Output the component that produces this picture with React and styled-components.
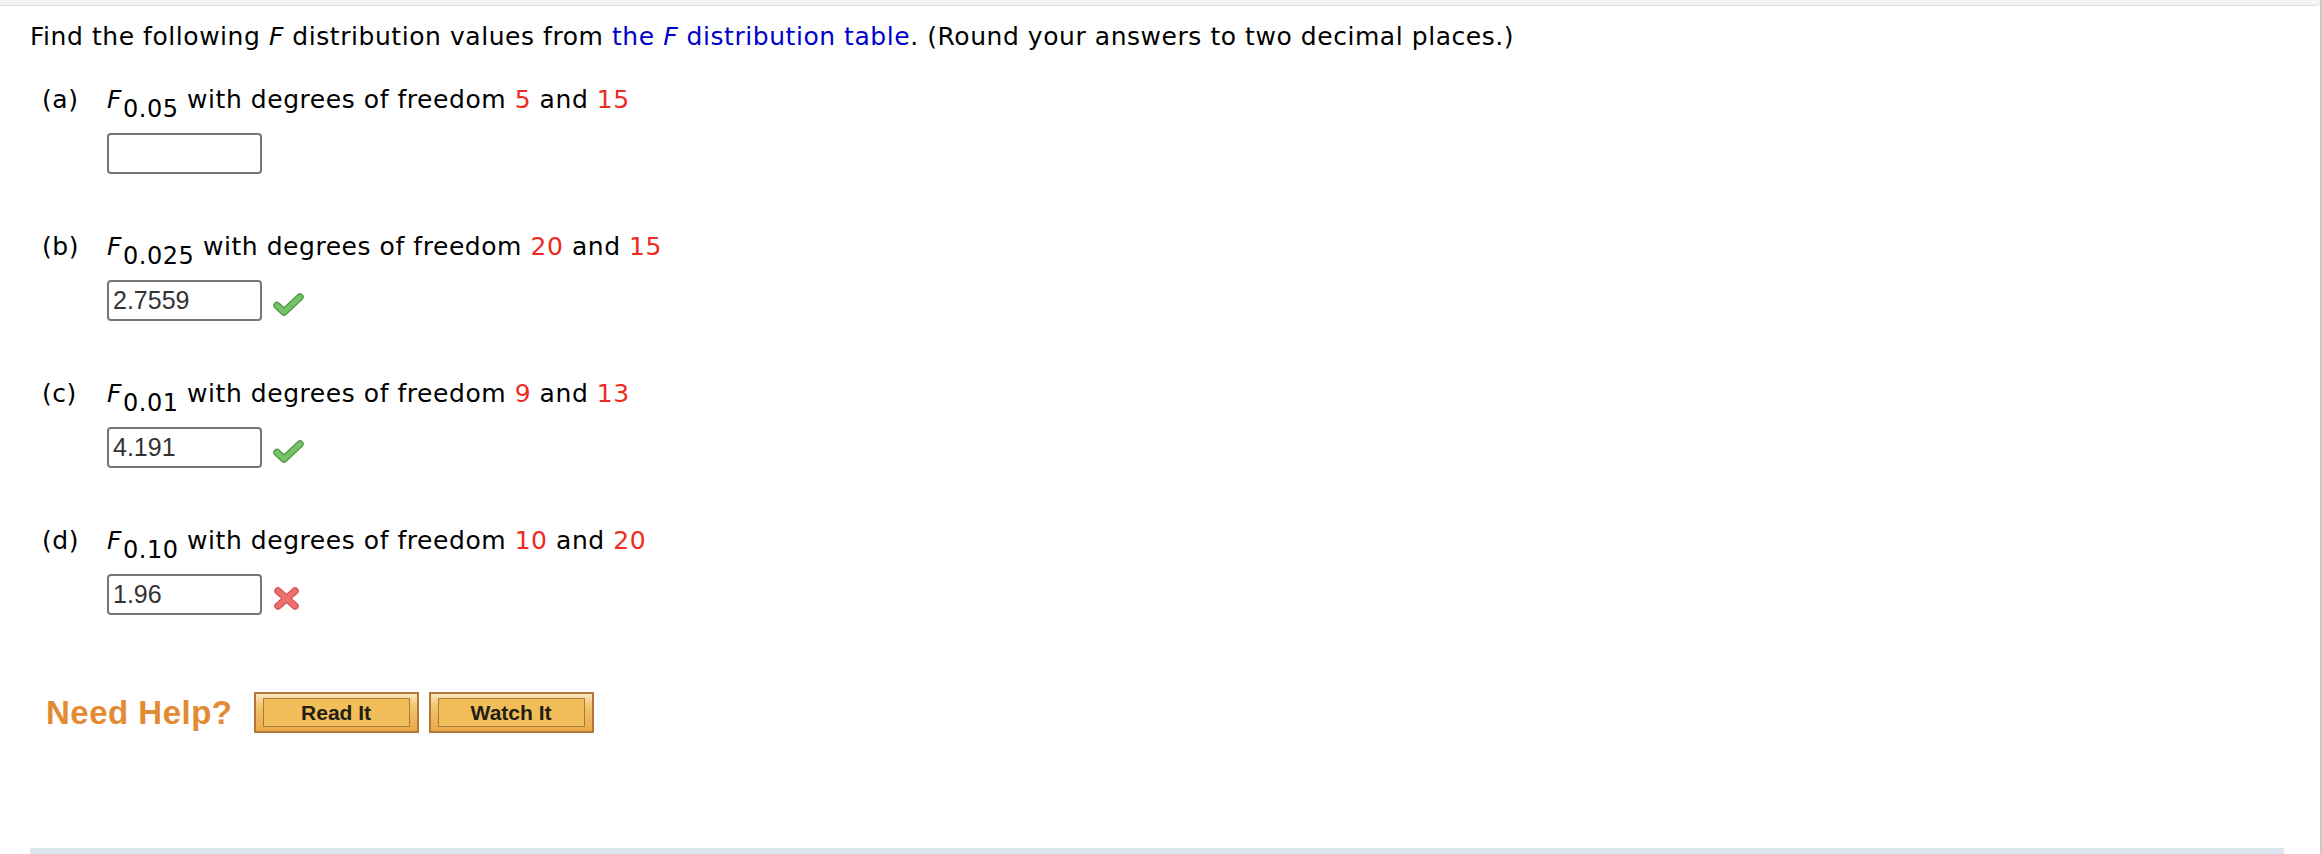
import React from 'react'
import styled, { createGlobalStyle } from 'styled-components'

const GlobalStyle = createGlobalStyle`
html, body {
    margin: 0;
    padding: 0;
    background: #fff;
    overflow: hidden;
}
body {
    font-family: "DejaVu Sans", Verdana, sans-serif;
}
`

const questions = [
    { key: 'a', sub: '0.05', df1: '5', df2: '15', value: '', status: null },
    { key: 'b', sub: '0.025', df1: '20', df2: '15', value: '2.7559', status: 'ok' },
    { key: 'c', sub: '0.01', df1: '9', df2: '13', value: '4.191', status: 'ok' },
    { key: 'd', sub: '0.10', df1: '10', df2: '20', value: '1.96', status: 'bad' },
]

const CheckMark = () => (
    <svg width="31" height="23" viewBox="0 0 31 23">
        <path d="M4 12.5 L11 19 L27 4" fill="none" stroke="#4f9a44" strokeWidth="7.5" strokeLinecap="round" strokeLinejoin="round" />
        <path d="M4 12.5 L11 19 L27 4" fill="none" stroke="#75c366" strokeWidth="5" strokeLinecap="round" strokeLinejoin="round" />
    </svg>
)

const CrossMark = () => (
    <svg width="27" height="25" viewBox="0 0 27 25">
        <path d="M5 5 L22 20 M22 5 L5 20" fill="none" stroke="#d85454" strokeWidth="7.5" strokeLinecap="round" />
        <path d="M5 5 L22 20 M22 5 L5 20" fill="none" stroke="#ec7070" strokeWidth="5" strokeLinecap="round" />
    </svg>
)

const App = () => {
    return (
        <Page>
            <GlobalStyle />
            <TopStrip />
            <Content>
                <Title>
                    Find the following <Var>F</Var> distribution values from{' '}
                    <TableLink href="#">the <Var>F</Var> distribution table</TableLink>. (Round your answers to two decimal places.)
                </Title>
                <Questions>
                    {questions.map((q) => (
                        <Question key={q.key}>
                            <Label>({q.key})</Label>
                            <Prompt>
                                <Var>F</Var><Sub>{q.sub}</Sub> with degrees of freedom <Num>{q.df1}</Num> and <Num>{q.df2}</Num>
                            </Prompt>
                            <AnswerRow>
                                <AnswerBox readOnly defaultValue={q.value} />
                                {q.status === 'ok' && <Mark><CheckMark /></Mark>}
                                {q.status === 'bad' && <Mark><CrossMark /></Mark>}
                            </AnswerRow>
                        </Question>
                    ))}
                </Questions>
                <HelpRow>
                    <HelpText>Need Help?</HelpText>
                    <HelpButton><ButtonFace>Read It</ButtonFace></HelpButton>
                    <HelpButton><ButtonFace>Watch It</ButtonFace></HelpButton>
                </HelpRow>
                <BottomBar />
            </Content>
        </Page>
    )
}

export default App

const Page = styled.div`
width: 2322px;
min-height: 854px;
box-sizing: border-box;
border-right: 2px solid #c9c9c9;
`

const TopStrip = styled.div`
height: 5px;
background: #f4f4f4;
border-bottom: 1px solid #dedede;
border-bottom-right-radius: 4px;
`

const Content = styled.div`
padding: 16px 0 0 30px;
`

const Title = styled.p`
margin: 0;
font-size: 25px;
line-height: 29px;
letter-spacing: 0.55px;
color: #000;
white-space: nowrap;
`

const Var = styled.i`
font-style: italic;
`

const TableLink = styled.a`
color: #0000cc;
text-decoration: none;
`

const Questions = styled.div`
margin-top: 34px;
padding-left: 12px;
`

const Question = styled.div`
display: grid;
grid-template-columns: 65px auto;
row-gap: 19px;
margin-bottom: 58px;
&:last-child {
    margin-bottom: 0;
}
`

const Label = styled.span`
font-size: 25px;
line-height: 29px;
letter-spacing: 0.55px;
color: #000;
`

const Prompt = styled.span`
font-size: 25px;
line-height: 29px;
letter-spacing: 0.55px;
color: #000;
white-space: nowrap;
`

const Sub = styled.span`
font-size: 24px;
line-height: 0;
vertical-align: -9px;
margin-left: 1px;
`

const Num = styled.span`
color: #ee2b1f;
`

const AnswerRow = styled.div`
grid-column: 2;
display: flex;
align-items: center;
gap: 11px;
height: 41px;
`

const AnswerBox = styled.input`
width: 155px;
height: 41px;
box-sizing: border-box;
border: 2px solid #767676;
border-radius: 4px;
padding: 0 4px;
font-family: "Liberation Sans", Arial, sans-serif;
font-size: 25px;
color: #333;
background: #fff;
outline: none;
`

const Mark = styled.span`
display: flex;
margin-top: 7px;
`

const HelpRow = styled.div`
margin-top: 77px;
padding-left: 16px;
display: flex;
align-items: center;
gap: 10px;
height: 41px;
`

const HelpText = styled.span`
font-family: "Liberation Sans", Arial, sans-serif;
font-weight: bold;
font-size: 33px;
color: #e38b33;
margin-right: 11px;
letter-spacing: 0.5px;
`

const HelpButton = styled.button`
width: 165px;
height: 41px;
box-sizing: border-box;
padding: 4px 7px;
border: 2px solid #b3773a;
background: linear-gradient(#fbe6bd 0%, #f3c46c 35%, #eaa948 100%);
cursor: pointer;
display: flex;
`

const ButtonFace = styled.span`
flex: 1;
display: flex;
align-items: center;
justify-content: center;
border: 1px solid #ab7c42;
background: #f2be5a;
font-family: "Liberation Sans", Arial, sans-serif;
font-weight: bold;
font-size: 21px;
color: #231f12;
`

const BottomBar = styled.div`
margin-top: 115px;
width: 2254px;
height: 20px;
background: #dce6ee;
`
